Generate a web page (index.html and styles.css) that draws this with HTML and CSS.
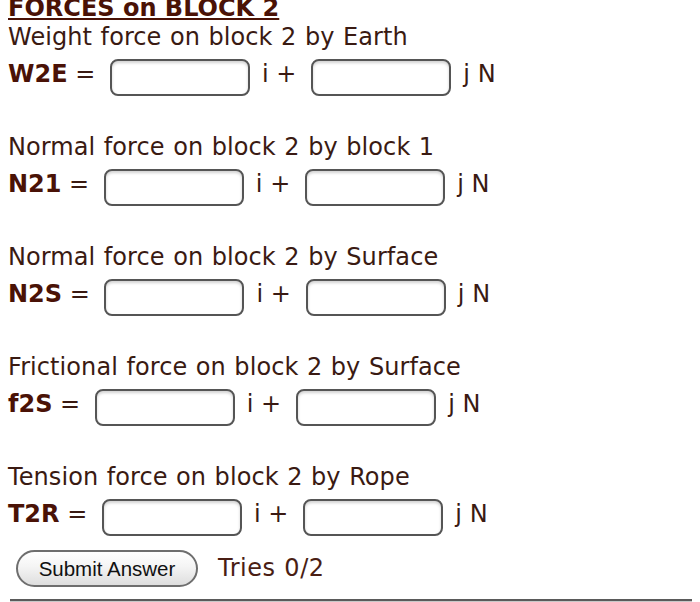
FILE: index.html
```html
<!DOCTYPE html>
<html>
<head>
<meta charset="utf-8">
<link rel="stylesheet" href="styles.css">
</head>
<body>
<h1 class="title">FORCES on BLOCK 2</h1>
<div class="groups">
  <div class="group">
    <div class="label">Weight force on block 2 by Earth</div>
    <div class="row"><b class="var">W2E</b> = <input class="box" type="text"><span class="unit">i +</span><input class="box" type="text"><span class="unit">j N</span></div>
  </div>
  <div class="group">
    <div class="label">Normal force on block 2 by block 1</div>
    <div class="row"><b class="var">N21</b> = <input class="box" type="text"><span class="unit">i +</span><input class="box" type="text"><span class="unit">j N</span></div>
  </div>
  <div class="group">
    <div class="label">Normal force on block 2 by Surface</div>
    <div class="row"><b class="var">N2S</b> = <input class="box" type="text"><span class="unit">i +</span><input class="box" type="text"><span class="unit">j N</span></div>
  </div>
  <div class="group">
    <div class="label">Frictional force on block 2 by Surface</div>
    <div class="row"><b class="var">f2S</b> = <input class="box" type="text"><span class="unit">i +</span><input class="box" type="text"><span class="unit">j N</span></div>
  </div>
  <div class="group">
    <div class="label">Tension force on block 2 by Rope</div>
    <div class="row"><b class="var">T2R</b> = <input class="box" type="text"><span class="unit">i +</span><input class="box" type="text"><span class="unit">j N</span></div>
  </div>
</div>
<div class="submit-row">
  <button class="submit" type="button">Submit Answer</button>
  <span class="tries">Tries 0/2</span>
</div>
<hr class="rule">
</body>
</html>
```
FILE: styles.css
```css
html, body {
  margin: 0;
  padding: 0;
  background: #fff;
  overflow: hidden;
}
body {
  padding: 0 8px;
  font-family: "DejaVu Sans", Verdana, sans-serif;
  font-size: 24px;
  color: #3a1a12;
}
.title {
  margin: -6px 0 0;
  font-size: 24px;
  line-height: 29px;
  font-weight: bold;
  color: #4a1206;
  text-decoration: underline;
  text-decoration-thickness: 2px;
  text-underline-offset: 2px;
}
.groups {
  display: flex;
  flex-direction: column;
  gap: 37px;
}
.label {
  line-height: 29px;
  white-space: nowrap;
  word-spacing: 0.8px;
  letter-spacing: 0.08px;
}
.row {
  margin-top: 7px;
  height: 37px;
  line-height: 31px;
  white-space: nowrap;
}
.var {
  color: #4a1206;
  font-weight: bold;
}
.unit {
  margin: 0 8px 0 12px;
}
.box {
  vertical-align: top;
  box-sizing: border-box;
  width: 140px;
  height: 37px;
  margin: 0 0 0 7px;
  padding: 0;
  border: 2px solid #555;
  border-radius: 8px;
  background: #fff;
  box-shadow: inset 0 2px 3px rgba(0, 0, 0, 0.18);
  font: inherit;
}
.submit-row {
  margin-top: 14px;
  display: flex;
  align-items: center;
  gap: 20px;
}
.submit {
  box-sizing: border-box;
  width: 182px;
  height: 37px;
  margin-left: 8px;
  padding: 0;
  border: 2px solid #6e6e6e;
  border-radius: 19px;
  background: linear-gradient(#ffffff, #f4f4f4 45%, #dedede);
  font-family: "Liberation Sans", Arial, sans-serif;
  font-size: 20.5px;
  color: #111;
}
.tries {
  line-height: 29px;
  color: #4a1e14;
  word-spacing: 0.8px;
  letter-spacing: 0.5px;
}
.rule {
  margin: 12px 0 0 2px;
  height: 0;
  border: none;
  border-top: 2px solid #5a5a5a;
  border-bottom: 1px solid #c8c8c8;
}
```
